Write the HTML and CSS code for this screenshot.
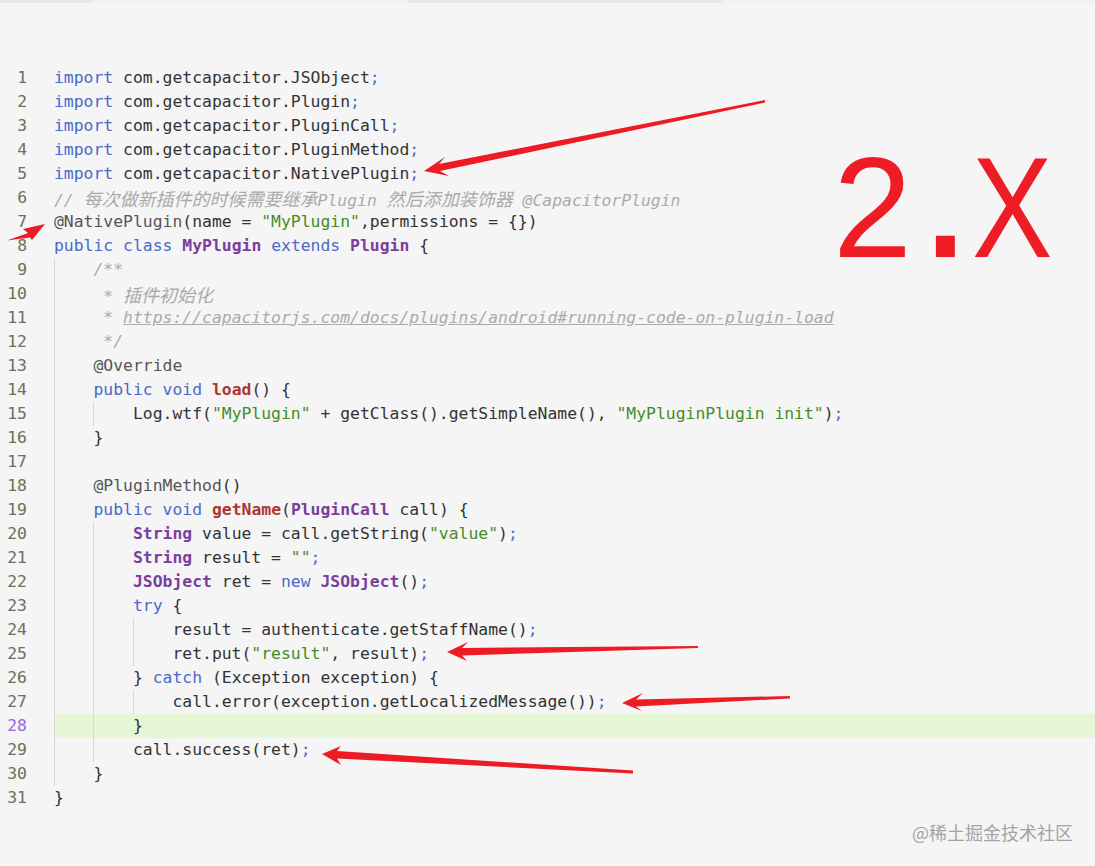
FILE: index.html
```html
<!DOCTYPE html>
<html lang="zh-CN">
<head>
<meta charset="utf-8">
<title>MyPlugin.java</title>
<link rel="stylesheet" href="styles.css">
</head>
<body>
<div class="tabs"><span class="tab dark w1"></span><span class="tab light w2"></span><span class="tab dark w3"></span><span class="tab light grow"></span></div>
<div class="editor">
  <div class="line"><span class="ln">1</span><div class="code"><span class="kw">import</span> com.getcapacitor.JSObject<span class="kw">;</span></div></div>
  <div class="line"><span class="ln">2</span><div class="code"><span class="kw">import</span> com.getcapacitor.Plugin<span class="kw">;</span></div></div>
  <div class="line"><span class="ln">3</span><div class="code"><span class="kw">import</span> com.getcapacitor.PluginCall<span class="kw">;</span></div></div>
  <div class="line"><span class="ln">4</span><div class="code"><span class="kw">import</span> com.getcapacitor.PluginMethod<span class="kw">;</span></div></div>
  <div class="line"><span class="ln">5</span><div class="code"><span class="kw">import</span> com.getcapacitor.NativePlugin<span class="kw">;</span></div></div>
  <div class="line"><span class="ln">6</span><div class="code"><span class="cm">// <span class="cjk">每次做新插件的时候需要继承</span>Plugin <span class="cjk">然后添加装饰器</span> @CapacitorPlugin</span></div></div>
  <div class="line"><span class="ln">7</span><div class="code"><span class="an">@NativePlugin</span>(name = <span class="str">"MyPlugin"</span>,permissions = {})</div></div>
  <div class="line"><span class="ln">8</span><div class="code"><span class="kw">public</span> <span class="kw">class</span> <span class="ty">MyPlugin</span> <span class="kw">extends</span> <span class="ty">Plugin</span> {</div></div>
  <div class="line"><span class="ln">9</span><div class="code"><span class="ig"></span><span class="cm">/**</span></div></div>
  <div class="line"><span class="ln">10</span><div class="code"><span class="ig"></span><span class="ig0"></span><span class="cm"> * <span class="cjk">插件初始化</span></span></div></div>
  <div class="line"><span class="ln">11</span><div class="code"><span class="ig"></span><span class="ig0"></span><span class="cm"> * <span class="link">https://capacitorjs.com/docs/plugins/android#running-code-on-plugin-load</span></span></div></div>
  <div class="line"><span class="ln">12</span><div class="code"><span class="ig"></span><span class="ig0"></span><span class="cm"> */</span></div></div>
  <div class="line"><span class="ln">13</span><div class="code"><span class="ig"></span><span class="an">@Override</span></div></div>
  <div class="line"><span class="ln">14</span><div class="code"><span class="ig"></span><span class="kw">public</span> <span class="kw">void</span> <span class="fn">load</span>() {</div></div>
  <div class="line"><span class="ln">15</span><div class="code"><span class="ig"></span><span class="ig"></span>Log.wtf(<span class="str">"MyPlugin"</span> + getClass().getSimpleName(), <span class="str">"MyPluginPlugin init"</span>)<span class="kw">;</span></div></div>
  <div class="line"><span class="ln">16</span><div class="code"><span class="ig"></span>}</div></div>
  <div class="line"><span class="ln">17</span><div class="code"><span class="ig"></span></div></div>
  <div class="line"><span class="ln">18</span><div class="code"><span class="ig"></span><span class="an">@PluginMethod</span>()</div></div>
  <div class="line"><span class="ln">19</span><div class="code"><span class="ig"></span><span class="kw">public</span> <span class="kw">void</span> <span class="fn">getName</span>(<span class="ty">PluginCall</span> call) {</div></div>
  <div class="line"><span class="ln">20</span><div class="code"><span class="ig"></span><span class="ig"></span><span class="ty">String</span> value = call.getString(<span class="str">"value"</span>)<span class="kw">;</span></div></div>
  <div class="line"><span class="ln">21</span><div class="code"><span class="ig"></span><span class="ig"></span><span class="ty">String</span> result = <span class="str">""</span><span class="kw">;</span></div></div>
  <div class="line"><span class="ln">22</span><div class="code"><span class="ig"></span><span class="ig"></span><span class="ty">JSObject</span> ret = <span class="kw">new</span> <span class="ty">JSObject</span>()<span class="kw">;</span></div></div>
  <div class="line"><span class="ln">23</span><div class="code"><span class="ig"></span><span class="ig"></span><span class="kw">try</span> {</div></div>
  <div class="line"><span class="ln">24</span><div class="code"><span class="ig"></span><span class="ig"></span><span class="ig"></span>result = authenticate.getStaffName()<span class="kw">;</span></div></div>
  <div class="line"><span class="ln">25</span><div class="code"><span class="ig"></span><span class="ig"></span><span class="ig"></span>ret.put(<span class="str">"result"</span>, result)<span class="kw">;</span></div></div>
  <div class="line"><span class="ln">26</span><div class="code"><span class="ig"></span><span class="ig"></span>} <span class="kw">catch</span> (Exception exception) {</div></div>
  <div class="line"><span class="ln">27</span><div class="code"><span class="ig"></span><span class="ig"></span><span class="ig"></span>call.error(exception.getLocalizedMessage())<span class="kw">;</span></div></div>
  <div class="line active"><span class="ln">28</span><div class="code"><span class="ig"></span><span class="ig"></span>}</div></div>
  <div class="line"><span class="ln">29</span><div class="code"><span class="ig"></span><span class="ig"></span>call.success(ret)<span class="kw">;</span></div></div>
  <div class="line"><span class="ln">30</span><div class="code"><span class="ig"></span>}</div></div>
  <div class="line"><span class="ln">31</span><div class="code">}</div></div>
</div>

<div class="version"><span class="v2">2</span><span class="vdot">.</span><span class="vx">X</span></div>
<div class="watermark">@稀土掘金技术社区</div>

<svg class="arrows" width="1095" height="866" viewBox="0 0 1095 866" aria-hidden="true">
  <polygon points="424,171 445,157 439,164 765,100 765,102.5 440,171 449,176"/>
  <polygon points="45,224 23,229 28,233 7,240.5 30,237.5 32,240"/>
  <polygon points="447,652 468,642 462,648 698,646 698,648 462,655.5 467,661"/>
  <polygon points="622,703 643,693 636,699.5 790,696 790,698.5 636,706.5 642,711"/>
  <polygon points="322,754 341,746 337,751 633,770.5 633,773.5 337,758.5 341,765"/>
</svg>
</body>
</html>
```
FILE: styles.css
```css
html, body {
  margin: 0;
  padding: 0;
}

body {
  background: #f5f5f5;
  width: 1095px;
  height: 866px;
  overflow: hidden;
  position: relative;
  font-family: "DejaVu Sans Mono", "Liberation Mono", monospace;
}

.tabs {
  display: flex;
  height: 3px;
}

.tab { height: 3px; }
.tab.dark { background: #e9e9e9; }
.tab.light { background: #f2f2f2; }
.w1 { width: 92px; }
.w2 { width: 315px; }
.w3 { width: 316px; }
.grow { flex: 1; }

.editor {
  padding-top: 63px;
  font-size: 16.4px;
  color: #333333;
}

.line {
  display: flex;
  height: 24px;
  line-height: 24px;
}

.ln {
  flex: none;
  width: 27px;
  margin-right: 27px;
  text-align: right;
  color: #6d705b;
}

.line.active .ln { color: #9769dc; }
.line.active .code { background: #e4f6d4; }

.code {
  flex: 1;
  white-space: pre;
  height: 24px;
  overflow: hidden;
}

.ig,
.ig0 {
  display: inline-block;
  vertical-align: top;
  height: 24px;
  background: linear-gradient(#d8d8d8, #d8d8d8) no-repeat 0 0 / 1px 100%;
}

.ig { width: 4ch; }
.ig0 { width: 0; }

.kw { color: #4b69c6; }
.ty { color: #7a3e9d; font-weight: bold; }
.fn { color: #aa3731; font-weight: bold; }
.str { color: #448c27; }
.an { color: #555555; }
.cm { color: #aaaaaa; font-style: italic; }
.link { text-decoration: underline; }

.cjk {
  font-family: "Noto Sans CJK SC", sans-serif;
  font-size: 18px;
}

.version {
  position: absolute;
  left: 833px;
  top: 137px;
  font-family: "Liberation Sans", Arial, sans-serif;
  font-size: 142px;
  line-height: 142px;
  color: #ee1c25;
  white-space: nowrap;
  display: flex;
  align-items: baseline;
}

.v2 { display: inline-block; }
.vdot {
  display: inline-block;
  margin-left: 9px;
  transform: scale(1.4);
  transform-origin: 20% 85%;
}
.vx {
  display: inline-block;
  margin-left: 12px;
  transform: scaleX(0.85);
  transform-origin: left center;
}

.watermark {
  position: absolute;
  right: 22px;
  top: 821px;
  font-family: "Noto Sans CJK SC", sans-serif;
  font-size: 18px;
  line-height: 22px;
  color: #a3a3a3;
}

.arrows {
  position: absolute;
  left: 0;
  top: 0;
  pointer-events: none;
}

.arrows polygon { fill: #ed1c24; }
```
